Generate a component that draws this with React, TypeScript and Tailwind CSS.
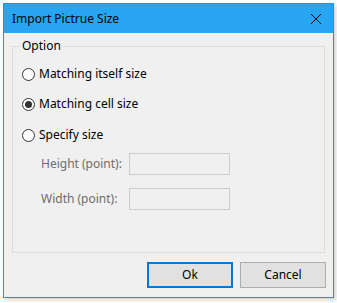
import React from "react";

const font = { fontFamily: '"Noto Sans", "Segoe UI", sans-serif' };

function Radio({ label, checked, top }: { label: string; checked?: boolean; top: string }) {
  return (
    <div className={`flex items-center h-[20px] pl-[9px] ${top}`}>
      <div className="w-[13px] h-[13px] rounded-full border border-[#333333] bg-white flex items-center justify-center shrink-0">
        {checked && <div className="w-[7px] h-[7px] rounded-full bg-[#333333]" />}
      </div>
      <span className="ml-[4px] text-[12px] leading-[16px] text-black">{label}</span>
    </div>
  );
}

export default function App() {
  return (
    <div className="w-[337px] h-[303px] bg-white pt-[3px] pl-[3px]" style={font}>
      <div className="w-[331px] h-[295px] border border-[#1e93e6] flex flex-col bg-[#f0f0f0] shadow-[2px_2px_4px_rgba(0,0,0,0.18)]">
        <div className="h-[29px] bg-[#28a5f0] flex items-center justify-between pl-[8px] pr-[10px] shrink-0">
          <span className="text-[12px] leading-[16px] text-black">Import Pictrue Size</span>
          <svg width="12" height="12" viewBox="0 0 12 12" className="mr-[1px]">
            <path d="M1 1 L11 11 M11 1 L1 11" stroke="#000" strokeWidth="1" />
          </svg>
        </div>
        <div className="flex-1 flex flex-col pt-[5px] px-[8px] pb-[9px]">
          <fieldset className="h-[215px] border border-[#dcdcdc] flex flex-col">
            <legend className="ml-[7px] px-[2px] text-[12px] leading-[16px] text-black">Option</legend>
            <Radio label="Matching itself size" top="mt-[10px]" />
            <Radio label="Matching cell size" checked top="mt-[10px]" />
            <Radio label="Specify size" top="mt-[11px]" />
            <div className="flex items-center mt-[8px] pl-[28px]">
              <span className="w-[88px] text-[12px] leading-[16px] text-[#6d6d6d]">Height (point):</span>
              <div className="w-[101px] h-[22px] border border-[#cccccc] bg-[#f0f0f0]" />
            </div>
            <div className="flex items-center mt-[13px] pl-[28px]">
              <span className="w-[88px] text-[12px] leading-[16px] text-[#6d6d6d]">Width (point):</span>
              <div className="w-[101px] h-[22px] border border-[#cccccc] bg-[#f0f0f0]" />
            </div>
          </fieldset>
          <div className="mt-[9px] h-[26px] flex justify-end gap-[7px] -mr-[1px]">
            <button className="w-[86px] h-[26px] border-2 border-[#0078d7] bg-[#e1e1e1] text-[12px] text-black">Ok</button>
            <button className="w-[86px] h-[26px] border border-[#adadad] bg-[#e1e1e1] text-[12px] text-black">Cancel</button>
          </div>
        </div>
      </div>
    </div>
  );
}
